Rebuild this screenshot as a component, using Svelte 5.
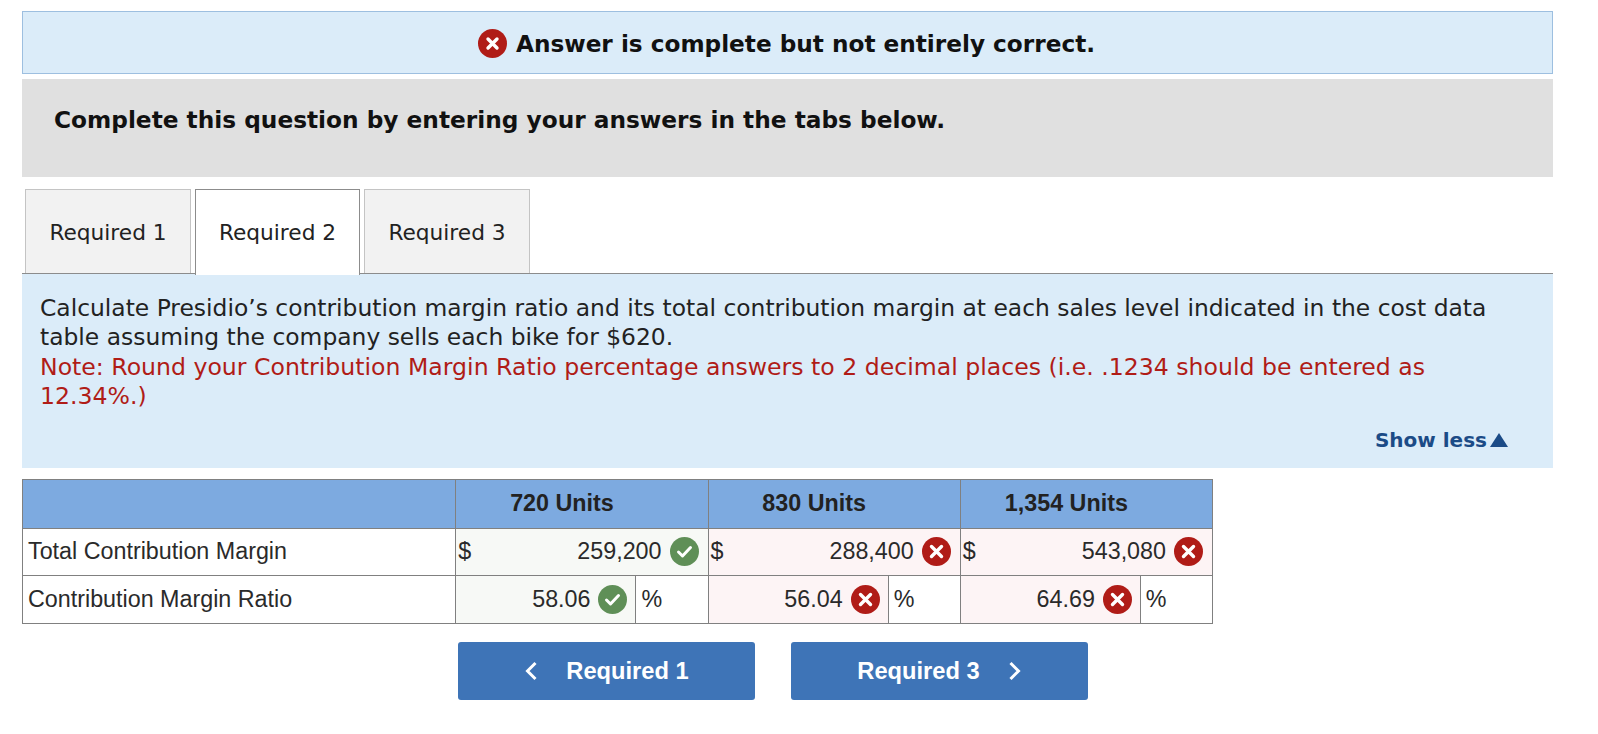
<script>
  const columns = ['720 Units', '830 Units', '1,354 Units'];
  const margin = [
    { value: '259,200', ok: true },
    { value: '288,400', ok: false },
    { value: '543,080', ok: false }
  ];
  const ratio = [
    { value: '58.06', ok: true },
    { value: '56.04', ok: false },
    { value: '64.69', ok: false }
  ];
  const tabs = ['Required 1', 'Required 2', 'Required 3'];
</script>

{#snippet mark(ok)}
  <svg class="mark" viewBox="0 0 29 29" aria-hidden="true">
    <circle cx="14.5" cy="14.5" r="14.5" fill={ok ? '#5f8f57' : '#b01c17'} />
    {#if ok}
      <path d="M8.5 15l4 4 8-8.5" fill="none" stroke="#fff" stroke-width="3" stroke-linecap="round" stroke-linejoin="round" />
    {:else}
      <path d="M9.5 9.5l10 10M19.5 9.5l-10 10" fill="none" stroke="#fff" stroke-width="3.4" stroke-linecap="round" />
    {/if}
  </svg>
{/snippet}

<div class="page">
  <div class="banner">
    <svg class="banner-mark" viewBox="0 0 29 29" aria-hidden="true">
      <circle cx="14.5" cy="14.5" r="14.5" fill="#b01c17" />
      <path d="M10 10l9 9M19 10l-9 9" fill="none" stroke="#fff" stroke-width="3.4" stroke-linecap="round" />
    </svg>
    <span>Answer is complete but not entirely correct.</span>
  </div>

  <div class="prompt">Complete this question by entering your answers in the tabs below.</div>

  <div class="tabs">
    {#each tabs as tab, i}
      <div class="tab" class:active={i === 1}>{tab}</div>
    {/each}
  </div>

  <div class="panel">
    <p>Calculate Presidio’s contribution margin ratio and its total contribution margin at each sales level indicated in the cost data table assuming the company sells each bike for $620.</p>
    <p class="note">Note: Round your Contribution Margin Ratio percentage answers to 2 decimal places (i.e. .1234 should be entered as 12.34%.)</p>
    <div class="show-less">Show less<span class="triangle"></span></div>
  </div>

  <table>
    <colgroup>
      <col class="c-label" />
      <col class="c-a" /><col class="c-b" />
      <col class="c-a" /><col class="c-b" />
      <col class="c-a" /><col class="c-b2" />
    </colgroup>
    <thead>
      <tr>
        <th></th>
        {#each columns as col}
          <th colspan="2">{col}</th>
        {/each}
      </tr>
    </thead>
    <tbody>
      <tr>
        <td class="label">Total Contribution Margin</td>
        {#each margin as cell}
          <td colspan="2" class:good={cell.ok} class:bad={!cell.ok}>
            <div class="money">
              <span>$</span>
              <span class="amount">{cell.value}{@render mark(cell.ok)}</span>
            </div>
          </td>
        {/each}
      </tr>
      <tr>
        <td class="label">Contribution Margin Ratio</td>
        {#each ratio as cell}
          <td class:good={cell.ok} class:bad={!cell.ok}>
            <span class="amount">{cell.value}{@render mark(cell.ok)}</span>
          </td>
          <td class="pct">%</td>
        {/each}
      </tr>
    </tbody>
  </table>

  <div class="nav">
    <button>
      <svg class="chevron" viewBox="0 0 14 20" aria-hidden="true"><path d="M11.5 2L3.5 10l8 8" /></svg>
      Required 1
    </button>
    <button>
      Required 3
      <svg class="chevron" viewBox="0 0 14 20" aria-hidden="true"><path d="M2.5 2l8 8-8 8" /></svg>
    </button>
  </div>
</div>

<style>
  :global(body) {
    margin: 0;
    background: #fff;
  }

  .page {
    padding: 11px 45px 0 22px;
    font-family: "DejaVu Sans", Verdana, sans-serif;
    color: #1a1a1a;
  }

  .banner {
    height: 63px;
    box-sizing: border-box;
    display: flex;
    align-items: center;
    justify-content: center;
    gap: 9px;
    background: #dbecf9;
    border: 1px solid #9dbfe0;
    font-size: 23.2px;
    font-weight: 700;
    color: #111;
    padding: 2px 2px 0 0;
  }

  .banner-mark {
    width: 29px;
    height: 29px;
  }

  .prompt {
    margin-top: 5px;
    height: 98px;
    box-sizing: border-box;
    padding: 27px 32px 0;
    background: #e0e0e0;
    font-size: 23.25px;
    font-weight: 700;
    line-height: 28px;
    color: #111;
  }

  .tabs {
    margin-top: 12px;
    height: 85px;
    box-sizing: border-box;
    display: flex;
    gap: 4px;
    padding-left: 3px;
    border-bottom: 1px solid #8c8c8c;
  }

  .tab {
    width: 166px;
    height: 84px;
    box-sizing: border-box;
    display: flex;
    align-items: center;
    justify-content: center;
    padding-top: 2px;
    background: #f2f2f2;
    border: 1px solid #c4c4c4;
    border-bottom: none;
    font-size: 21.7px;
    color: #222;
  }

  .tab.active {
    width: 165px;
    height: 86px;
    padding-bottom: 2px;
    position: relative;
    background: #fff;
    border-color: #8c8c8c;
    z-index: 1;
  }

  .panel {
    height: 194px;
    box-sizing: border-box;
    padding: 20px 18px 0;
    background: #dbecf9;
    font-size: 23.4px;
    line-height: 29.4px;
    color: #222;
  }

  .panel p {
    margin: 0;
    max-width: 1460px;
  }

  .panel .note {
    color: #b01c17;
    font-size: 23.6px;
  }

  .show-less {
    margin-top: 16px;
    padding-right: 27px;
    display: flex;
    align-items: center;
    justify-content: flex-end;
    gap: 3px;
    font-size: 20px;
    font-weight: 700;
    line-height: 24px;
    color: #1b4b87;
  }

  .triangle {
    width: 0;
    height: 0;
    border-left: 9px solid transparent;
    border-right: 9px solid transparent;
    border-bottom: 14px solid #1b4b87;
  }

  table {
    margin-top: 11px;
    width: 1191px;
    table-layout: fixed;
    border-collapse: collapse;
    font-family: "Liberation Sans", Arial, sans-serif;
    font-size: 23.3px;
    color: #2a2a2a;
  }

  .c-label { width: 433px; }
  .c-a { width: 180px; }
  .c-b { width: 72px; }
  .c-b2 { width: 72px; }

  th, td {
    border: 1.5px solid #808080;
    padding: 0;
    font-weight: 400;
  }

  th {
    height: 46px;
    background: #7daae0;
    font-weight: 700;
    color: #222;
  }

  thead th {
    padding: 0 40px 2px 0;
  }

  td {
    height: 44px;
    padding-bottom: 2px;
  }

  tbody tr:last-child td {
    height: 46px;
    padding-bottom: 1px;
  }

  .label {
    padding-left: 5px;
  }

  .good { background: #f7f9f6; }
  .bad { background: #fdf4f5; }

  .money {
    display: flex;
    justify-content: space-between;
    align-items: center;
    padding: 0 9px 0 2px;
  }

  .amount {
    display: flex;
    align-items: center;
    justify-content: flex-end;
    gap: 8px;
  }

  td > .amount {
    padding-right: 8px;
  }

  .pct {
    padding-left: 5px;
  }

  .mark {
    width: 29px;
    height: 29px;
    flex: none;
  }

  .nav {
    margin-top: 18px;
    padding-left: 436px;
    display: flex;
    gap: 36px;
  }

  button {
    width: 297px;
    height: 58px;
    display: flex;
    align-items: center;
    justify-content: center;
    gap: 28px;
    background: #3e74b7;
    border: none;
    border-radius: 3px;
    color: #fff;
    font-family: "Liberation Sans", Arial, sans-serif;
    font-size: 23.7px;
    font-weight: 700;
  }

  .chevron {
    width: 14px;
    height: 20px;
  }

  .chevron path {
    fill: none;
    stroke: #fff;
    stroke-width: 3;
  }
</style>
